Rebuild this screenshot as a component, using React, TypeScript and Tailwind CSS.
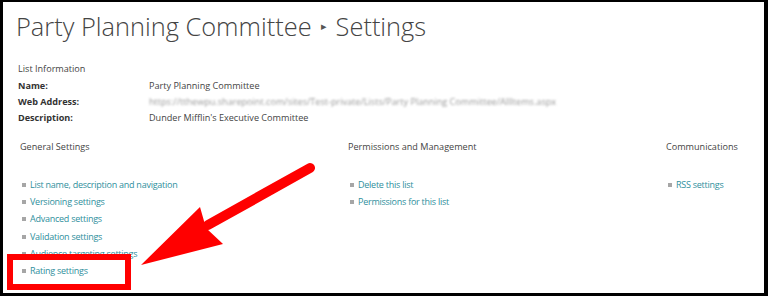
import React from "react";

const font = { fontFamily: '"Segoe UI", "Open Sans", "Noto Sans", sans-serif' };

function LinkItem({ text }: { text: string }) {
  return (
    <li className="flex items-center h-[17.3px]">
      <span className="w-[4px] h-[4px] bg-[#a6a6a6] mr-[4px] shrink-0" />
      <span className="text-[#2f8f9d] text-[9px] tracking-[-0.25px] whitespace-nowrap">{text}</span>
    </li>
  );
}

function Column({ title, links, className }: { title: string; links: string[]; className?: string }) {
  return (
    <div className={className}>
      <div className="text-[#444] text-[9.1px] h-[14px] leading-[14px]">{title}</div>
      <ul className="mt-[22px] pl-[2px]">
        {links.map((l) => (
          <LinkItem key={l} text={l} />
        ))}
      </ul>
    </div>
  );
}

export default function App() {
  return (
    <div className="w-[768px] h-[296px] bg-black pl-[3px] pt-[2px] pr-[4px] pb-[3px]" style={font}>
      <div className="relative w-full h-full bg-white overflow-hidden">
        <div className="pl-[13px] pt-[7px]">
          <h1 className="text-[#444] text-[25.4px] font-light leading-[34px] flex items-center whitespace-nowrap">
            <span>Party Planning Committee</span>
            <span className="mx-[9px] text-[11px] text-[#555]">▸</span>
            <span>Settings</span>
          </h1>
        </div>
        <div className="pl-[15px] mt-[18px] text-[9.1px] text-[#444]">
          <div className="h-[16px] leading-[16px]">List Information</div>
          <div className="grid grid-cols-[131px_1fr] leading-[16px] mt-[1px]">
            <div className="font-bold text-[#333]">Name:</div>
            <div>Party Planning Committee</div>
            <div className="font-bold text-[#333]">Web Address:</div>
            <div className="text-[#999] blur-[1.3px] whitespace-nowrap">
              https://tthewpu.sharepoint.com/sites/Test-private/Lists/Party Planning Committee/AllItems.aspx
            </div>
            <div className="font-bold text-[#333]">Description:</div>
            <div>Dunder Mifflin's Executive Committee</div>
          </div>
        </div>
        <div className="flex pl-[17px] mt-[14px]">
          <Column
            className="w-[328px]"
            title="General Settings"
            links={[
              "List name, description and navigation",
              "Versioning settings",
              "Advanced settings",
              "Validation settings",
              "Audience targeting settings",
              "Rating settings",
            ]}
          />
          <Column className="w-[318px]" title="Permissions and Management" links={["Delete this list", "Permissions for this list"]} />
          <Column title="Communications" links={["RSS settings"]} />
        </div>

        {/* red highlight box */}
        <div className="absolute left-[4px] top-[252px] w-[124px] h-[36px] border-[6px] border-[#ff0000]" />
        {/* red arrow */}
        <svg className="absolute left-0 top-0" width="768" height="296" viewBox="0 0 768 296">
          <line x1="307" y1="166" x2="205" y2="223" stroke="#ff0000" strokeWidth="10" strokeLinecap="round" />
          <polygon points="138,263 197,205 203,226 220,242" fill="#ff0000" />
        </svg>
      </div>
    </div>
  );
}
